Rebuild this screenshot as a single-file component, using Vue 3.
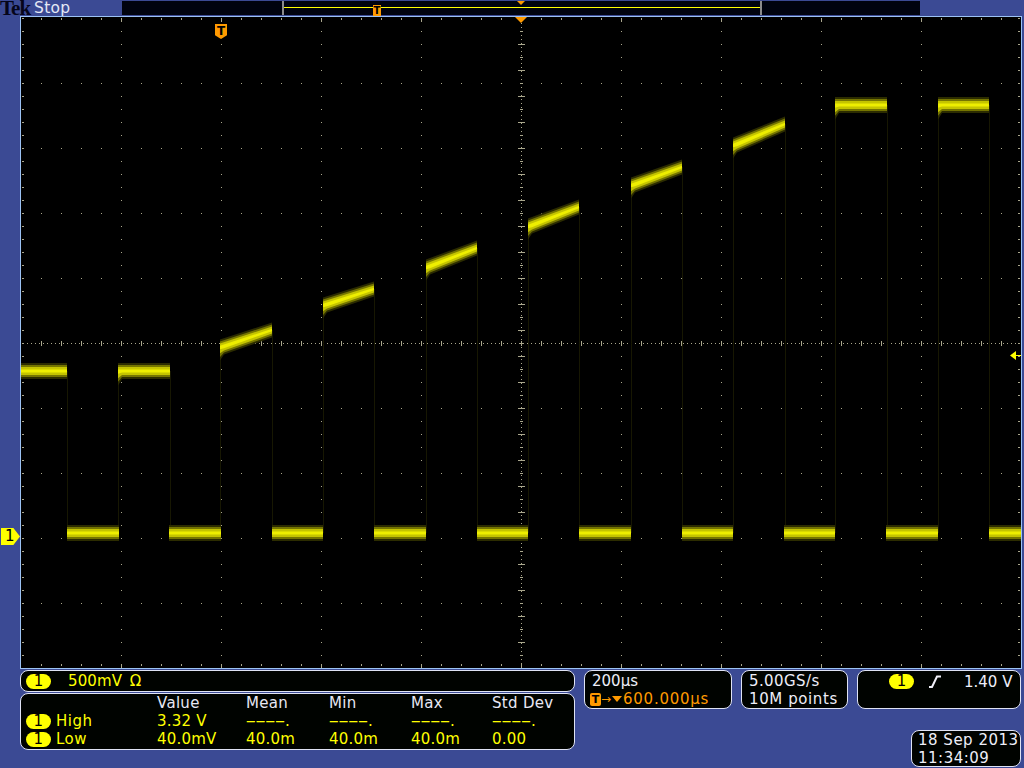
<template>
  <div class="scope">
    <div class="top-bar">
      <div class="brand"><span class="tek">Tek</span><span class="state">Stop</span></div>
      <div class="record">
        <div class="view"></div>
        <div class="rec-t">T</div>
        <div class="rec-tri"></div>
      </div>
    </div>

    <div class="screen">
      <svg class="graticule" viewBox="21 17 1000 651" width="1000" height="651">
        <path :d="gridPath" fill="#aaa78c" />
        <path :d="edgePath" fill="none" stroke="#171702" stroke-width="1" />
        <path v-for="layer in layers" :key="layer.color" :d="layer.d" :fill="layer.color" />
        <line x1="1011" x2="1021" y1="355.5" y2="355.5" stroke="#ffff00" />
        <polygon points="1010,355.5 1016,351 1016,360" fill="#ffff00" />
      </svg>
      <div class="trig-t">T</div>
      <div class="trig-tri"></div>
      <div class="ch-marker">1</div>
    </div>

    <div class="bottom">
      <div class="left-col">
        <div class="panel channel">
          <span class="chip">1</span>
          <span class="scale">500mV Ω</span>
        </div>
        <div class="panel meas">
          <template v-for="(row, i) in table" :key="i">
            <div class="row-name">
              <span v-if="row.name" class="chip">1</span>
              <span v-if="row.name">{{ row.name }}</span>
            </div>
            <div v-for="cell in row.cells" :key="cell.k" :class="i === 0 ? 'head' : 'val'">{{ cell.v }}</div>
          </template>
        </div>
      </div>

      <div class="right-col">
        <div class="info-row">
          <div class="panel time">
            <div>200µs</div>
            <div class="delay"><span class="t-box">T</span><span class="arrow">→</span><span class="tri"></span><span class="delay-val">600.000µs</span></div>
          </div>
          <div class="panel rate">
            <div>5.00GS/s</div>
            <div class="points">10M points</div>
          </div>
          <div class="panel trigger">
            <span class="chip">1</span>
            <svg class="slope" viewBox="0 0 12 13" width="12" height="13">
              <path d="M0 12H3L8 1.500H12" fill="none" stroke="#f0f0f8" stroke-width="2" />
            </svg>
            <span class="level">1.40 V</span>
          </div>
        </div>
        <div class="panel date">
          <div>18 Sep  2013</div>
          <div>11:34:09</div>
        </div>
      </div>
    </div>
  </div>
</template>

<script setup>
// graticule dots, all in page coordinates
const dot = (x, y, w = 1, h = 1) => `M${x} ${y}h${w}v${h}h${-w}z`

let grid = ''
for (let k = 0; k <= 50; k++) {
  const y = 18 + k * 13
  // left and right edge
  grid += dot(22, y, 2) + dot(1018, y, 2)
  // centre column
  grid += dot(k % 2 ? 520 : 518, y, k % 2 ? 3 : 7)
  if (k % 5 !== 0) {
    for (let x = 121; x < 1021; x += 100) grid += dot(x, y)
  }
}
for (let x = 41; x < 1021; x += 20) {
  const major = (x - 21) % 100 === 0
  grid += dot(x, 18, 1, major ? 4 : 2) + dot(x, 664, 1, major ? 4 : 2)
  for (let k = 1; k < 10; k++) {
    if (k !== 5) grid += dot(x, 18 + k * 65)
  }
  grid += dot(x, 341, 1, 5)
}
for (let x = 23; x < 1021; x += 4) grid += dot(x, 343)
for (let y = 19; y < 667; y += 4) grid += dot(521, y)
const gridPath = grid

const lows = [[67, 119], [169, 221], [272, 323], [374, 426], [477, 528], [579, 631], [682, 733], [784, 835], [886, 938], [989, 1021]]
// x start, y start, x end, y end of each high part
const highs = [
  [21, 371, 67, 371],
  [118, 371, 170, 371],
  [220, 347, 272, 330],
  [323, 305, 374, 289],
  [426, 267, 477, 248],
  [528, 226, 579, 207],
  [631, 185, 682, 167],
  [733, 145, 785, 124],
  [835, 105, 887, 105],
  [938, 105, 989, 105]
]

const band = (a, y1, b, y2, h, hook) =>
  `M${a} ${y1 - h}L${b} ${y2 - h}V${y2 + h}L${a + 4} ${y1 + h}L${a} ${y1 + h + hook}Z`

// dimmest band first, brightest last
const layer = (color, flat, high) => ({
  color,
  d:
    lows.map(([a, b]) => band(a, 533, b, 533, flat, 0)).join('') +
    highs
      .map(([a, y1, b, y2]) => {
        const h = y1 === y2 ? flat : high
        return band(a, y1, b, y2, h, a === 21 ? 0 : h * 0.8)
      })
      .join('')
})
const layers = [
  layer('#2c2c00', 8, 7.5),
  layer('#757500', 6, 5.5),
  layer('#c4c400', 4, 3.5),
  layer('#eeee00', 1.5, 1.2)
]

const edgePath = highs
  .map(([a, y1, b, y2]) => (a === 21 ? '' : `M${a + 0.5} ${y1}V533`) + `M${b + 0.5} ${y2}V533`)
  .join('')

const cells = (list) => list.map((v, k) => ({ k, v }))
const table = [
  { name: '', cells: cells(['Value', 'Mean', 'Min', 'Max', 'Std Dev']) },
  { name: 'High', cells: cells(['3.32 V', '‒‒‒‒.', '‒‒‒‒.', '‒‒‒‒.', '‒‒‒‒.']) },
  { name: 'Low', cells: cells(['40.0mV', '40.0m', '40.0m', '40.0m', '0.00']) }
]
</script>

<style scoped>
.scope {
  position: relative;
  width: 1024px;
  height: 768px;
  overflow: hidden;
  display: flex;
  flex-direction: column;
  background-color: #3b4a94;
  font-family: "DejaVu Sans", sans-serif;
  font-size: 15px;
  color: #eeeef8;
}

.top-bar {
  display: flex;
  height: 16px;
}

.brand {
  width: 122px;
  display: flex;
  align-items: flex-start;
}

.tek {
  font-family: "Liberation Serif", serif;
  font-weight: bold;
  font-size: 21px;
  letter-spacing: -1px;
  color: #05051a;
  width: 34px;
  line-height: 17px;
}

.state {
  font-size: 15.5px;
  letter-spacing: 0.3px;
  line-height: 16px;
  color: #e4e8f4;
}

.record {
  position: relative;
  width: 798px;
  margin-top: 1px;
  height: 14px;
  background-color: #00030f;
}

.view {
  position: absolute;
  left: 160px;
  top: 0;
  width: 476px;
  height: 14px;
  border-left: 2px solid #8c8c8c;
  border-right: 2px solid #8c8c8c;
  background: linear-gradient(#ffff00, #ffff00) center 6px / 100% 1px no-repeat;
}

.rec-t {
  position: absolute;
  left: 251px;
  top: 4px;
  width: 8px;
  height: 11px;
  background-color: #ff9a00;
  color: #000;
  font-size: 10px;
  line-height: 11px;
  font-weight: bold;
  text-align: center;
}

.rec-tri {
  position: absolute;
  left: 395px;
  top: 0;
  width: 8px;
  height: 4px;
  background-color: #ff9a00;
  clip-path: polygon(0 0, 100% 0, 50% 100%);
}

.screen {
  position: relative;
  flex: none;
  width: 1000px;
  height: 651px;
  margin-left: 20px;
  border: 1px solid #9cc2f4;
  background-color: #000;
}

.graticule {
  display: block;
}

.trig-t {
  position: absolute;
  left: 194px;
  top: 7px;
  width: 12px;
  height: 15px;
  background-color: #ff9a00;
  color: #000;
  font-size: 12px;
  line-height: 14px;
  font-weight: bold;
  text-align: center;
  clip-path: polygon(0 0, 100% 0, 100% 75%, 50% 100%, 0 75%);
}

.trig-tri {
  position: absolute;
  left: 494px;
  top: 0;
  width: 12px;
  height: 6px;
  background-color: #ff9a00;
  clip-path: polygon(0 0, 100% 0, 50% 100%);
}

.ch-marker {
  position: absolute;
  left: -20px;
  top: 511px;
  width: 19px;
  height: 17px;
  background-color: #ffff00;
  color: #000;
  font-size: 15px;
  line-height: 17px;
  padding-left: 4px;
  box-sizing: border-box;
  clip-path: polygon(0 0, 65% 0, 100% 50%, 65% 100%, 0 100%);
}

.bottom {
  display: flex;
  padding-left: 20px;
  margin-top: 1px;
  column-gap: 9px;
}

.left-col {
  width: 555px;
  display: flex;
  flex-direction: column;
  row-gap: 1px;
}

.panel {
  background-color: #000300;
  border: 1px solid #dfe3f4;
  border-radius: 8px;
  box-sizing: border-box;
  line-height: 18px;
}

.chip {
  display: inline-block;
  flex: none;
  width: 25px;
  height: 15px;
  border-radius: 8px;
  background-color: #ffff00;
  color: #000;
  font-size: 15px;
  line-height: 15px;
  text-align: center;
}

.channel {
  height: 22px;
  display: flex;
  align-items: center;
  padding-left: 5px;
  color: #ffff00;
}

.scale {
  margin-left: 17px;
  word-spacing: 3px;
  letter-spacing: 0.1px;
}

.meas {
  height: 57px;
  padding: 0 0 0 5px;
  display: grid;
  grid-template-columns: 131px 89px 83px 82px 81px auto;
  grid-auto-rows: 18px;
  align-items: center;
  color: #ffff00;
}

.row-name {
  display: flex;
  align-items: center;
  column-gap: 5px;
  height: 18px;
  letter-spacing: 0.5px;
}

.head {
  color: #e8e8f4;
  letter-spacing: 0.3px;
}

.val {
  color: #ffff00;
  letter-spacing: 0.2px;
}

.right-col {
  flex: 1;
  display: flex;
  flex-direction: column;
  align-items: flex-end;
}

.info-row {
  display: flex;
  column-gap: 9px;
  width: 100%;
  height: 39px;
}

.info-row .panel {
  height: 39px;
  padding: 1px 0 0 7px;
}

.time {
  width: 148px;
}

.delay {
  display: flex;
  align-items: center;
  color: #ff9a00;
}

.t-box {
  width: 11px;
  height: 13px;
  margin-left: -2px;
  background-color: #ff9a00;
  color: #000;
  border-radius: 2px;
  font-size: 11px;
  line-height: 13px;
  font-weight: bold;
  text-align: center;
}

.arrow {
  font-size: 12px;
  width: 11px;
}

.tri {
  width: 10px;
  height: 6px;
  margin-right: 1px;
  background-color: #ff9a00;
  clip-path: polygon(0 0, 100% 0, 50% 100%);
}

.delay-val {
  letter-spacing: 0.75px;
}

.rate {
  width: 107px;
  letter-spacing: 0.4px;
}

.points {
  letter-spacing: 0.6px;
}

.trigger {
  width: 164px;
  display: flex;
  align-items: flex-start;
  padding: 3px 0 0 31px !important;
}

.slope {
  margin-left: 15px;
  margin-top: 1px;
}

.level {
  margin-left: 23px;
  margin-top: -1px;
}

.date {
  width: 110px;
  height: 37px;
  margin-top: 21px;
  margin-right: 3px;
  padding: 0 0 0 6px;
  white-space: pre;
  letter-spacing: 0.5px;
}
</style>
